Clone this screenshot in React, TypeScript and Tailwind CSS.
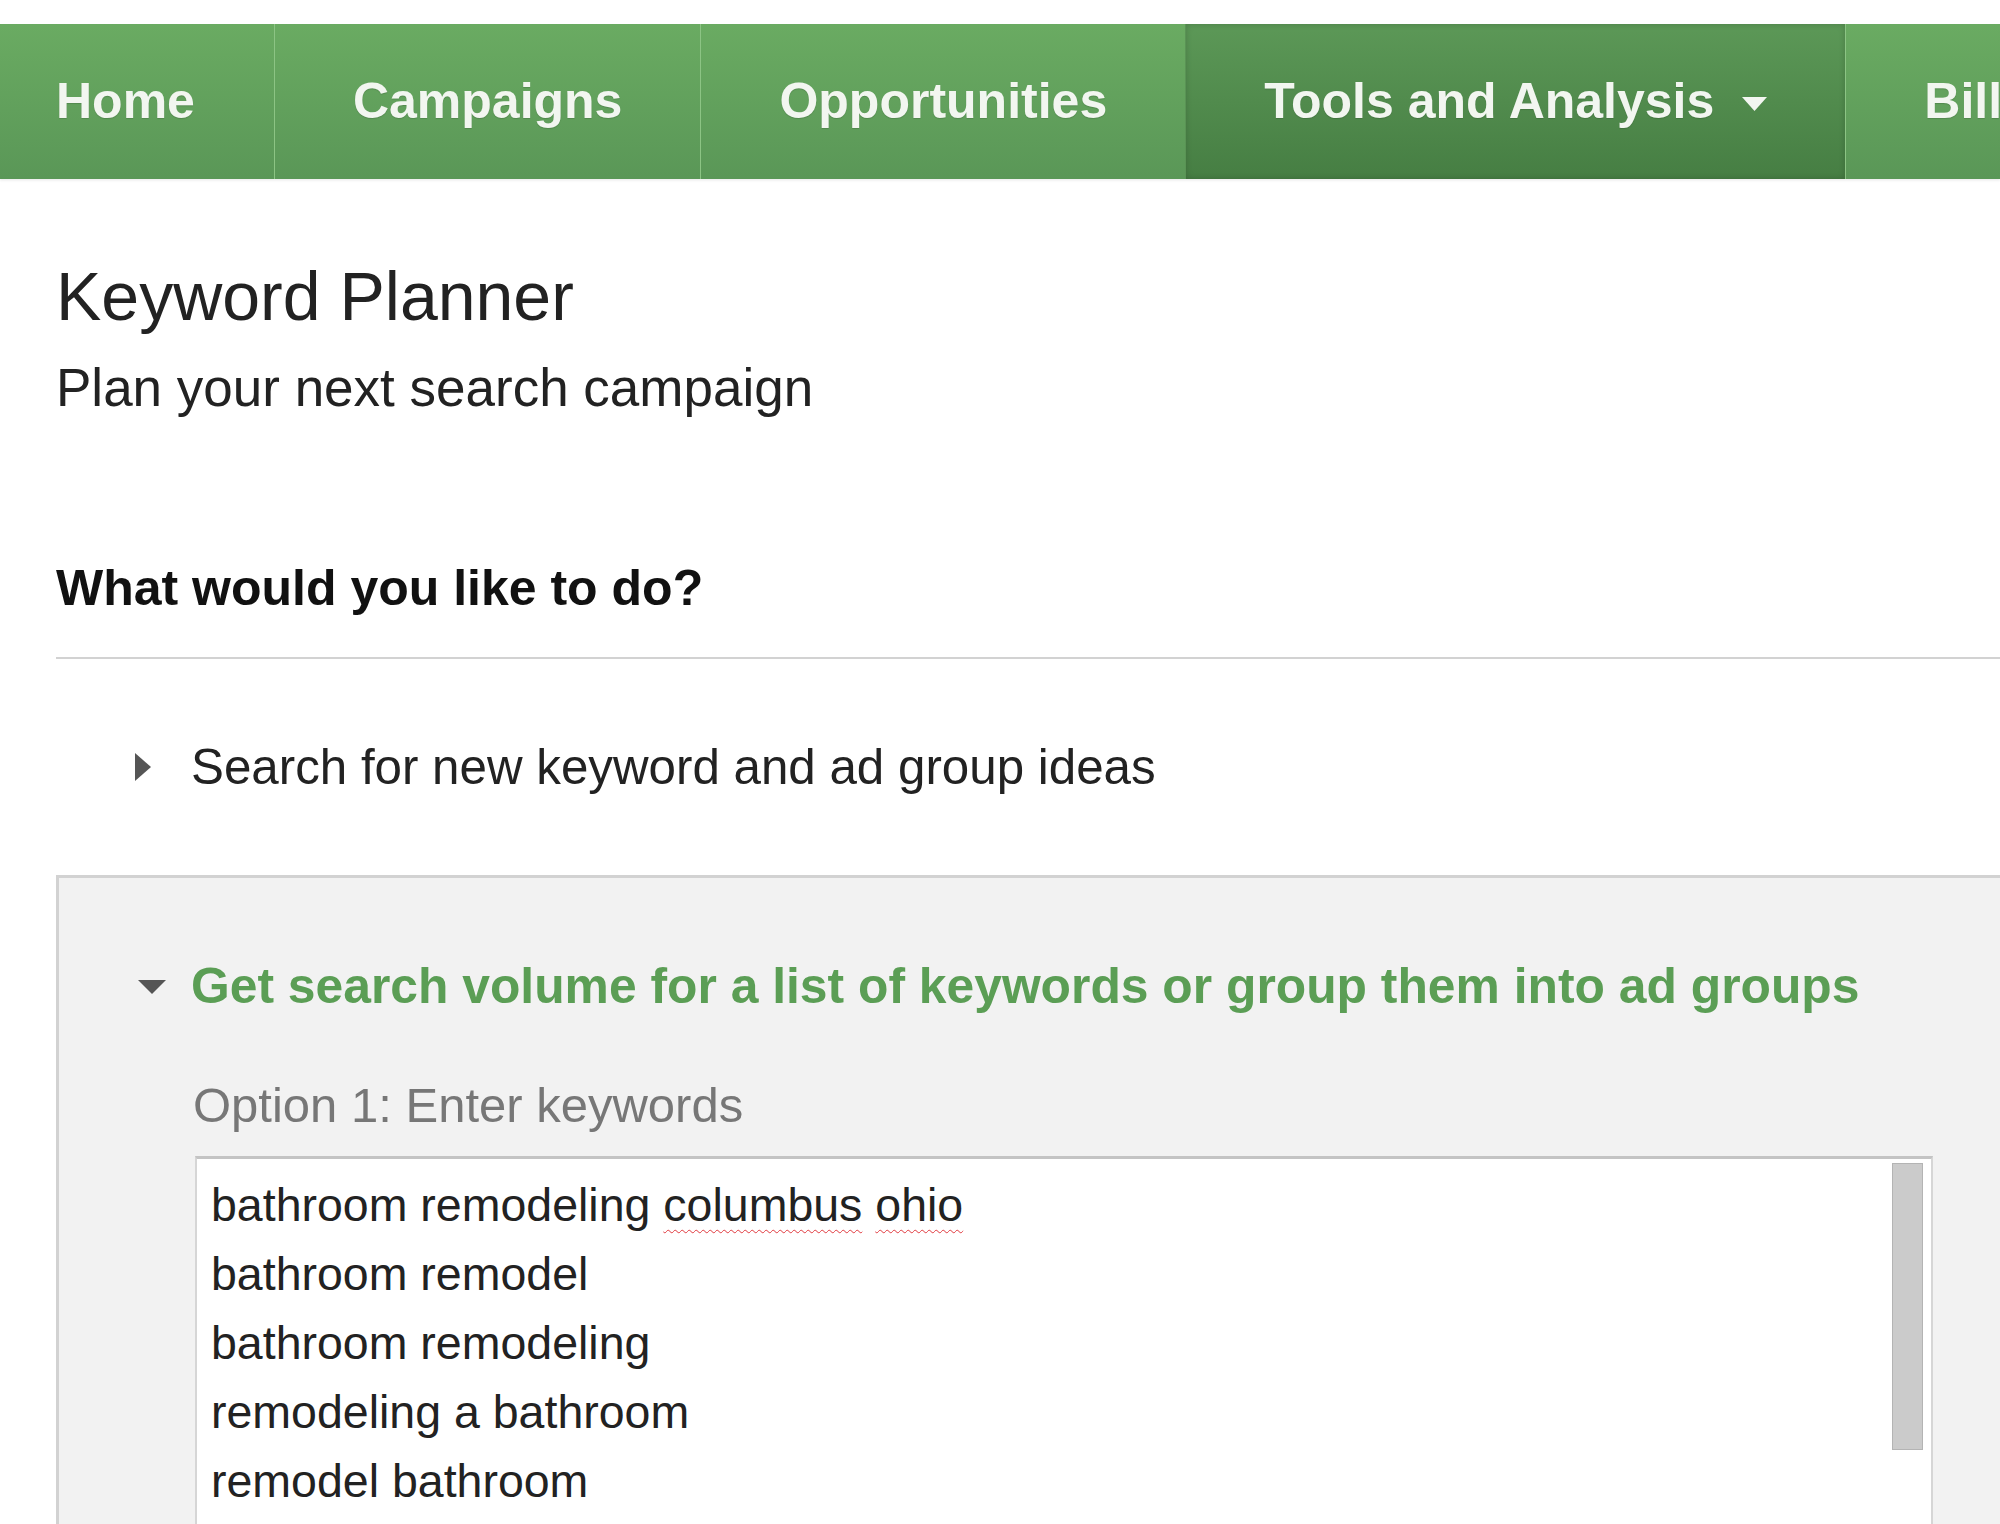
import React from "react";

function NavItem({
  label,
  first,
  active,
  caret,
}: {
  label: string;
  first?: boolean;
  active?: boolean;
  caret?: boolean;
}) {
  return (
    <div
      className={
        "flex items-center h-full shrink-0 " +
        (first ? "pl-[56px] pr-[79px] " : "pl-[78px] pr-[78px] border-l border-[#8cc484] ") +
        (active
          ? "bg-[linear-gradient(to_bottom,#5c9857,#467e43)] border-l-[#5a9355] shadow-[inset_0_0_6px_rgba(0,0,0,0.18)] "
          : "")
      }
    >
      <span className="[text-shadow:0_1px_1px_rgba(0,0,0,0.15)]">{label}</span>
      {caret && (
        <svg width="25" height="14" viewBox="0 0 25 14" className="ml-[28px] mt-[4px]">
          <polygon points="0,0 25,0 12.5,14" fill="#f3f6f1" />
        </svg>
      )}
    </div>
  );
}

export default function App() {
  return (
    <div className="w-[2000px] h-[1524px] overflow-hidden bg-white pt-[24px] font-['Liberation_Sans',Arial,sans-serif] text-[#222]">
      <nav className="flex h-[155px] bg-[linear-gradient(to_bottom,#6aab62,#5a9757)] text-[#f2f6f0] text-[50px] font-bold whitespace-nowrap shadow-[0_2px_2px_rgba(0,0,0,0.06)]">
        <NavItem label="Home" first />
        <NavItem label="Campaigns" />
        <NavItem label="Opportunities" />
        <NavItem label="Tools and Analysis" active caret />
        <NavItem label="Bill" />
      </nav>

      <main className="pl-[56px]">
        <h1 className="mt-[77px] text-[68px] leading-[80px] text-[#222] font-normal">Keyword Planner</h1>
        <p className="mt-[22px] text-[53px] leading-[60px] text-[#222]">Plan your next search campaign</p>
        <h2 className="mt-[140px] text-[50px] leading-[60px] font-bold text-[#111]">What would you like to do?</h2>
        <div className="mt-[39px] h-[2px] bg-[#d2d2d2]" />

        <div className="mt-[78px] flex items-center h-[60px] pl-[79px]">
          <svg width="16" height="28" viewBox="0 0 16 28" className="shrink-0">
            <polygon points="0,0 16,14 0,28" fill="#555" />
          </svg>
          <span className="ml-[40px] text-[49.3px] text-[#222]">Search for new keyword and ad group ideas</span>
        </div>

        <section className="mt-[78px] border-t-[3px] border-l-[3px] border-[#d2d2d2] bg-[#f2f2f2] h-[700px]">
          <div className="pt-[78px] flex items-center h-[138px] pl-[79px]">
            <svg width="28" height="14" viewBox="0 0 28 14" className="shrink-0 mt-[2px]">
              <polygon points="0,0 28,0 14,14" fill="#555" />
            </svg>
            <span className="ml-[25px] text-[49.8px] leading-[60px] font-bold text-[#5b9e55]">
              Get search volume for a list of keywords or group them into ad groups
            </span>
          </div>

          <div className="mt-[59px] pl-[134px] text-[49px] leading-[60px] text-[#777]">Option 1: Enter keywords</div>

          <div className="relative mt-[21px] ml-[136px] w-[1738px] h-[420px] bg-white border-t-[3px] border-x-2 border-t-[#c4c4c4] border-x-[#d6d6d6]">
            <div className="pt-[12px] pl-[14px] text-[46.5px] leading-[69px] text-[#222]">
              <div>
                bathroom remodeling{" "}
                <span className="underline decoration-wavy decoration-[#e0393e] decoration-1 underline-offset-[8px]">columbus</span>{" "}
                <span className="underline decoration-wavy decoration-[#e0393e] decoration-1 underline-offset-[8px]">ohio</span>
              </div>
              <div>bathroom remodel</div>
              <div>bathroom remodeling</div>
              <div>remodeling a bathroom</div>
              <div>remodel bathroom</div>
            </div>
            <div className="absolute right-[8px] top-[4px] w-[31px] h-[287px] bg-[#cbcbcb] border border-[#b4b4b4]" />
          </div>
        </section>
      </main>
    </div>
  );
}
